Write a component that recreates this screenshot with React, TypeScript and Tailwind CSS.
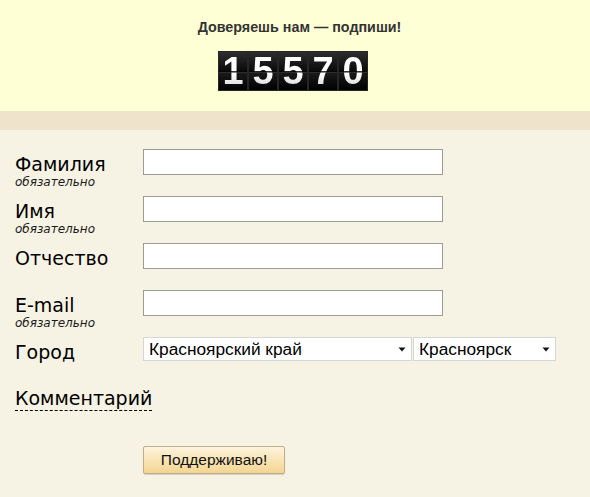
import React from "react";

const digits = ["1", "5", "5", "7", "0"];

function Row({ label, req, children }: { label: string; req?: boolean; children: React.ReactNode }) {
  return (
    <div className="flex h-[47px] items-start">
      <div className="w-[128px] pt-[4px] text-black">
        <div className="text-[19px] leading-[22px] font-['DejaVu_Sans',sans-serif]">{label}</div>
        {req && (
          <div className="text-[12px] leading-[14px] italic text-[#1a1a1a] font-['DejaVu_Sans',sans-serif]">
            обязательно
          </div>
        )}
      </div>
      {children}
    </div>
  );
}

function Input() {
  return <div className="h-[26px] w-[300px] border border-[#9e9b90] bg-white" />;
}

function Select({ text, w }: { text: string; w: string }) {
  return (
    <div
      className={`${w} flex h-[24px] items-center justify-between border border-[#d6d6d6] bg-white pl-[5px] pr-[5px] font-['Liberation_Sans',Arial,sans-serif] text-[17.3px] leading-[20px] text-black`}
    >
      <span>{text}</span>
      <svg width="8" height="5" viewBox="0 0 8 5">
        <path d="M0.5 0.5 L7.5 0.5 L4 4.5 Z" fill="#111" />
      </svg>
    </div>
  );
}

export default function App() {
  return (
    <div className="min-h-[497px] w-full bg-[#f7f3e4]">
      <div className="flex h-[111px] flex-col items-center bg-[#ffffd6]">
        <div className="pt-[19px] pl-[9px] font-['Liberation_Sans',Arial,sans-serif] text-[14.3px] leading-[16px] font-bold text-[#333]">
          Доверяешь нам — подпиши!
        </div>
        <div className="mt-[16px] mr-[4px] flex h-[40px] bg-black">
          {digits.map((d, i) => (
            <div
              key={i}
              className="relative flex h-[40px] w-[30px] items-center justify-center border border-[#262626] bg-[linear-gradient(to_bottom,#2e2e2e_0%,#0a0a0a_50%,#1c1c1c_51%,#000_100%)]"
            >
              <span className="bg-[linear-gradient(to_bottom,#ffffff_55%,#d0d0d0_100%)] bg-clip-text font-['Liberation_Sans',Arial,sans-serif] text-[38px] leading-[40px] font-bold text-transparent">
                {d}
              </span>
              <div className="absolute left-0 right-0 top-[19px] h-[1px] bg-black/80" />
              <div className="absolute left-0 right-0 top-[20px] h-[1px] bg-[#3a3a3a]/60" />
            </div>
          ))}
        </div>
      </div>
      <div className="h-[19px] bg-[#efe3cb]" />
      <div className="pl-[15px] pt-[19px]">
        <Row label="Фамилия" req>
          <Input />
        </Row>
        <Row label="Имя" req>
          <Input />
        </Row>
        <Row label="Отчество">
          <Input />
        </Row>
        <Row label="E-mail" req>
          <Input />
        </Row>
        <Row label="Город">
          <div className="flex gap-[1px]">
            <Select text="Красноярский край" w="w-[269px]" />
            <Select text="Красноярск" w="w-[143px]" />
          </div>
        </Row>
        <div className="pt-[3px]">
          <span className="inline-block border-b border-dashed border-black pb-[1px] font-['DejaVu_Sans',sans-serif] text-[19px] leading-[22px] text-black">
            Комментарий
          </span>
        </div>
        <div className="pl-[128px] pt-[35px]">
          <button className="h-[28px] w-[142px] rounded-[2px] border border-[#bfae8a] bg-[linear-gradient(to_bottom,#fdf3dc_0%,#f8e3b2_55%,#f3d592_100%)] font-['Liberation_Sans',Arial,sans-serif] text-[15.5px] text-[#111] shadow-[0_1px_1px_rgba(0,0,0,0.15)]">
            Поддерживаю!
          </button>
        </div>
      </div>
    </div>
  );
}
